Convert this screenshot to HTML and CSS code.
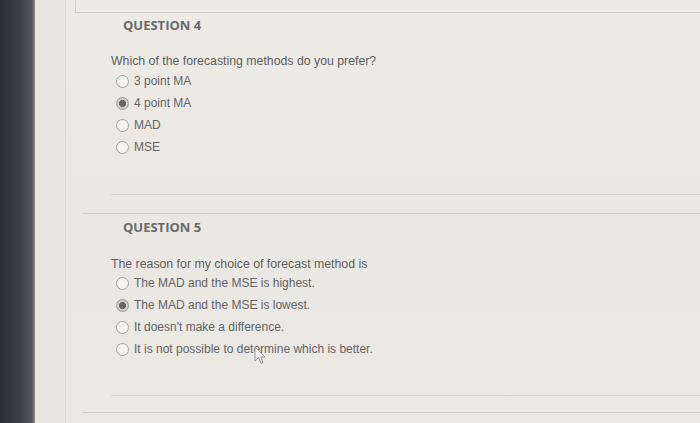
FILE: index.html
```html
<!DOCTYPE html>
<html>
<head>
<meta charset="utf-8">
<link rel="stylesheet" href="styles.css">
</head>
<body>
<div class="page">
  <div class="sidebar"></div>
  <div class="gutter"></div>
  <main class="main">
    <div class="topbox"></div>

    <section class="question">
      <h2 class="heading">QUESTION 4</h2>
      <p class="prompt">Which of the forecasting methods do you prefer?</p>
      <ul class="options">
        <li class="option"><span class="radio"></span>3 point MA</li>
        <li class="option"><span class="radio checked"></span>4 point MA</li>
        <li class="option"><span class="radio"></span>MAD</li>
        <li class="option"><span class="radio"></span>MSE</li>
      </ul>
      <div class="rule"></div>
    </section>

    <section class="question bordered">
      <h2 class="heading">QUESTION 5</h2>
      <p class="prompt">The reason for my choice of forecast method is</p>
      <ul class="options">
        <li class="option"><span class="radio"></span>The MAD and the MSE is highest.</li>
        <li class="option"><span class="radio checked"></span>The MAD and the MSE is lowest.</li>
        <li class="option"><span class="radio"></span>It doesn't make a difference.</li>
        <li class="option"><span class="radio"></span>It is not possible to determine which is better.</li>
      </ul>
      <div class="rule"></div>
    </section>
    <div class="endline"></div>
  </main>
</div>
<svg class="cursor" width="12" height="20" viewBox="0 0 12 20">
  <path d="M1 1 L1 15 L4.5 11.5 L7 17.5 L9 16.6 L6.6 11 L11 11 Z" fill="#f4f2ef" stroke="#9a9a9a" stroke-width="1" stroke-linejoin="round"/>
</svg>
</body>
</html>
```

FILE: styles.css
```css
html, body {
  margin: 0;
  padding: 0;
  width: 700px;
  height: 423px;
  overflow: hidden;
  background: #ece9e5;
  font-family: "Liberation Sans", Arial, sans-serif;
}

.page {
  display: flex;
  height: 423px;
  position: relative;
}

.sidebar {
  width: 35px;
  flex: none;
  background: linear-gradient(to right, #2e2e35 0%, #3e3e46 55%, #55555d 90%, #8a8786 100%);
}

.gutter {
  width: 30px;
  flex: none;
  background: #e9e6e2;
  border-right: 1px solid #dedad5;
}

.main {
  flex: 1;
  background: linear-gradient(to bottom, #eeebe7 0%, #ebe8e4 50%, #ece8e4 100%);
}

.topbox {
  margin-left: 9px;
  height: 12px;
  border-left: 1px solid #d4d0cb;
  border-bottom: 1px solid #cfcbc6;
  background: #efece8;
}

.question {
  margin-left: 17px;
  padding-bottom: 18px;
}

.question.bordered {
  border-top: 1px solid #d3cfca;
  padding-top: 5px;
  padding-bottom: 16px;
}

.heading {
  margin: 4px 0 0 40px;
  font-family: "Open Sans", "Liberation Sans", sans-serif;
  font-weight: 700;
  font-size: 13px;
  line-height: 16px;
  color: #6a6a6c;
}

.bordered .heading {
  margin-top: 0;
}

.prompt {
  margin: 20px 0 0 28px;
  font-size: 12.3px;
  line-height: 16px;
  color: #5e5e60;
}

.bordered .prompt {
  margin-top: 21px;
}

.options {
  list-style: none;
  margin: 1px 0 0 33px;
  padding: 0;
}

.bordered .options {
  margin-top: 0;
}

.option {
  display: flex;
  align-items: center;
  gap: 5px;
  height: 22px;
  font-size: 12px;
  color: #646466;
}

.radio {
  width: 11px;
  height: 11px;
  flex: none;
  border-radius: 50%;
  border: 1px solid #a4a2a0;
  background: #f6f4f1;
  box-sizing: content-box;
}

.radio.checked {
  background: radial-gradient(circle, #666668 0 3.2px, #d0cecb 3.8px 100%);
  border-color: #9c9a98;
}

.rule {
  margin: 36px 0 0 28px;
  height: 1px;
  background: #d6d2cd;
}

.bordered .rule {
  margin-top: 35px;
}

.endline {
  margin-left: 16px;
  height: 1px;
  background: #d3cfca;
}

.cursor {
  position: absolute;
  left: 254px;
  top: 346px;
}
```
